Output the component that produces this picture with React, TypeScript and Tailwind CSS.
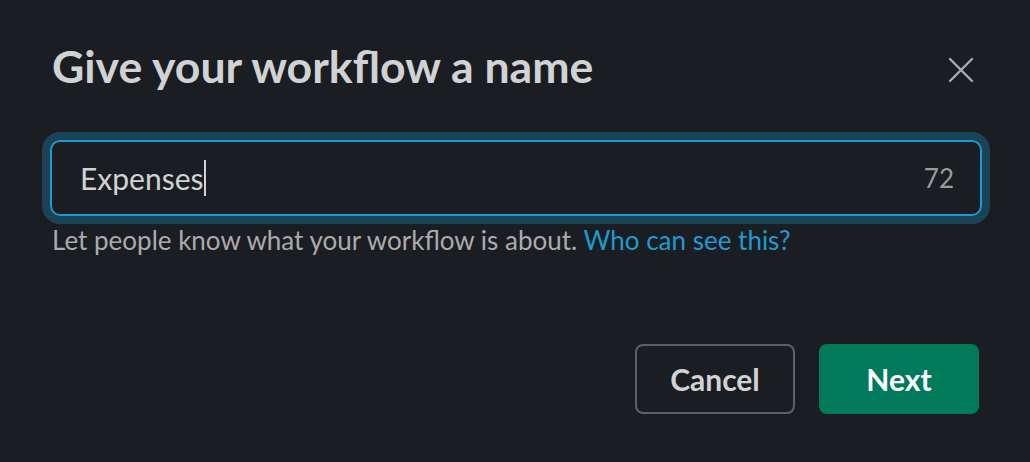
import React from "react";

export default function App() {
  return (
    <div className="w-[1030px] h-[462px] bg-[#1a1d21] overflow-hidden" style={{ fontFamily: "Lato, 'Noto Sans', sans-serif" }}>
      <div className="flex items-center justify-between pl-[52px] pr-[56px] pt-[38px]">
        <h1 className="text-[44.6px] leading-[56px] font-bold text-[#d1d2d3]">Give your workflow a name</h1>
        <svg width="26" height="26" viewBox="0 0 26 26" className="mt-[8px]">
          <path d="M2 2 L24 24 M24 2 L2 24" stroke="#ababad" strokeWidth="2.4" strokeLinecap="round" />
        </svg>
      </div>
      <div className="pl-[50px] pr-[48px] mt-[46px]">
        <div className="h-[76px] rounded-[10px] border-2 border-[#1d9bd1] shadow-[0_0_0_8px_rgba(29,155,209,0.3)] flex items-center justify-between pl-[28px] pr-[26px]">
          <div className="flex items-center text-[30px] text-[#d1d2d3]">
            <span>Expenses</span>
            <span className="w-[1.5px] h-[36px] bg-[#d1d2d3] ml-[1px]" />
          </div>
          <span className="text-[26px] text-[#9a9b9c]">72</span>
        </div>
        <p className="mt-[6px] ml-[2px] text-[26px] leading-[36px] text-[#ababad]">
          Let people know what your workflow is about.{" "}
          <span className="text-[#1d9bd1]">Who can see this?</span>
        </p>
      </div>
      <div className="flex justify-end gap-[24px] pr-[51px] mt-[86px]">
        <button className="w-[160px] h-[70px] rounded-[8px] border-2 border-[#5f6064] text-[30px] font-bold text-[#d1d2d3]">Cancel</button>
        <button className="w-[160px] h-[70px] rounded-[8px] bg-[#007a5a] text-[30px] font-bold text-white">Next</button>
      </div>
    </div>
  );
}
